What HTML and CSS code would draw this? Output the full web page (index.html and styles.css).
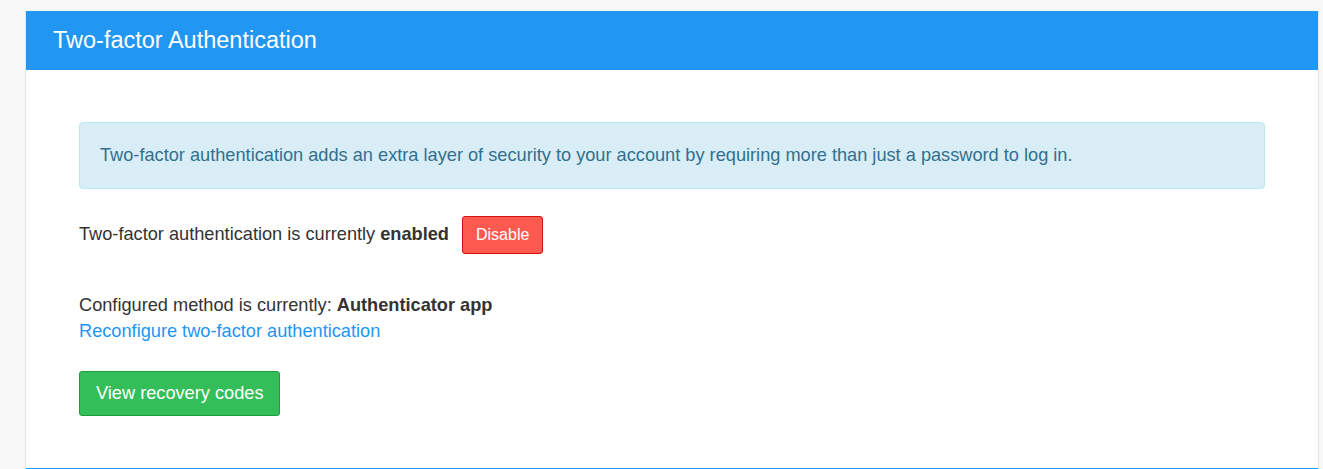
FILE: index.html
```html
<!DOCTYPE html>
<html lang="en">
<head>
<meta charset="utf-8">
<title>Two-factor Authentication</title>
<link rel="stylesheet" href="styles.css">
</head>
<body>
<div class="page">
  <section class="card">
    <header class="card-header">Two-factor Authentication</header>
    <div class="card-body">
      <div class="alert">Two-factor authentication adds an extra layer of security to your account by requiring more than just a password to log in.</div>
      <div class="status-row">
        <span>Two-factor authentication is currently <strong>enabled</strong></span>
        <button class="btn btn-danger" type="button">Disable</button>
      </div>
      <p class="method">Configured method is currently: <strong>Authenticator app</strong><br>
        <a class="link" href="#">Reconfigure two-factor authentication</a></p>
      <button class="btn btn-success" type="button">View recovery codes</button>
    </div>
  </section>
</div>
</body>
</html>
```

FILE: styles.css
```css
html, body {
  margin: 0;
  padding: 0;
}

body {
  background: #f8f8f8;
  font-family: "Liberation Sans", Arial, Helvetica, sans-serif;
  font-size: 18.2px;
  line-height: 25.7px;
  color: #333333;
}

.page {
  padding: 11px 4px 0 25px;
}

.card {
  background: #ffffff;
  border-left: 1px solid #e6e6e6;
  border-right: 1px solid #e6e6e6;
}

.card-header {
  background: #2196f3;
  color: #ffffff;
  height: 59px;
  display: flex;
  align-items: center;
  padding-left: 27px;
  font-size: 23.5px;
  line-height: normal;
}

.card-body {
  padding: 52px 53px 52px 53px;
  border-bottom: 1px solid #2196f3;
}

.alert {
  background: #d9edf7;
  border: 1px solid #bce8f1;
  border-radius: 4px;
  color: #31708f;
  padding: 20px;
  line-height: 25px;
  margin-bottom: 27px;
}

.status-row {
  display: flex;
  align-items: center;
  gap: 13px;
  margin-bottom: 39px;
}

.method {
  margin: 0 0 26.6px 0;
}

.link {
  color: #2196f3;
  text-decoration: none;
}

.btn {
  font-family: "Liberation Sans", Arial, Helvetica, sans-serif;
  color: #ffffff;
  border-radius: 3px;
  cursor: pointer;
  display: inline-block;
  margin: 0;
}

.btn-danger {
  background: #fe5a4f;
  border: 1px solid #d4140c;
  font-size: 16px;
  line-height: 20px;
  padding: 8px 13px;
}

.btn-success {
  background: #33be5a;
  border: 1px solid #1c9c3d;
  font-size: 18.2px;
  line-height: 25px;
  padding: 9px 16px;
}
```
